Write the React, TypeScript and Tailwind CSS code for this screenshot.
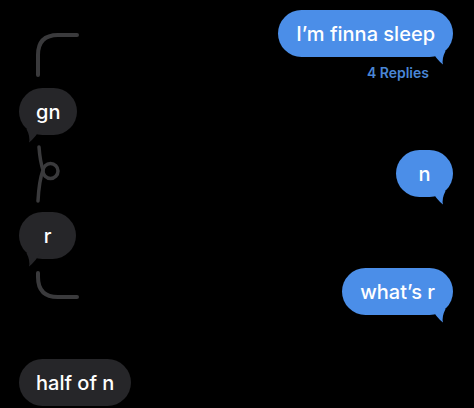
import React from "react";

const font = { fontFamily: "Inter, 'Noto Sans', sans-serif" };

function SentTail() {
  return (
    <svg
      className="absolute right-[7px] bottom-[-8px]"
      width="14"
      height="14"
      viewBox="0 0 14 14"
    >
      <path d="M0 0 Q4 8 11 13.5 Q9.5 8 13.5 0 Z" fill="#4b8ee8" />
    </svg>
  );
}

function ReceivedTail() {
  return (
    <svg
      className="absolute left-[7px] bottom-[-8px]"
      width="14"
      height="14"
      viewBox="0 0 14 14"
    >
      <path d="M14 0 Q10 8 3 13.5 Q4.5 8 0.5 0 Z" fill="#262629" />
    </svg>
  );
}

function Sent({ text, tail = true }: { text: string; tail?: boolean }) {
  return (
    <div className="relative flex h-[47px] min-w-[57px] items-center justify-center rounded-[24px] bg-[#4b8ee8] px-[18px] text-[20px] font-medium leading-[24px] text-white">
      <span className="relative">{text}</span>
      {tail && <SentTail />}
    </div>
  );
}

function Received({ text, tail = true }: { text: string; tail?: boolean }) {
  return (
    <div className="relative flex h-[47px] min-w-[57px] items-center justify-center rounded-[24px] bg-[#262629] px-[17px] text-[20px] font-medium leading-[24px] text-white">
      <span className="relative">{text}</span>
      {tail && <ReceivedTail />}
    </div>
  );
}

export default function App() {
  return (
    <div
      className="flex h-[408px] w-[474px] items-start justify-between overflow-hidden bg-black"
      style={font}
    >
      {/* thread column */}
      <div className="flex flex-col items-start pl-[19px]">
        <svg className="mt-[31px]" width="62" height="46" viewBox="0 0 62 46">
          <path
            d="M58 4 L39 4 Q19 4 19 24 L19 44"
            fill="none"
            stroke="#3a3a3c"
            strokeWidth="4"
            strokeLinecap="round"
          />
        </svg>
        <div className="mt-[11px]">
          <Received text="gn" />
        </div>
        <svg className="mt-[10px]" width="50" height="58" viewBox="0 0 50 58">
          <path
            d="M20 2 Q21 16 24 25 Q20 36 19 56"
            fill="none"
            stroke="#3a3a3c"
            strokeWidth="3.5"
            strokeLinecap="round"
          />
          <circle cx="31.5" cy="26" r="7.5" fill="none" stroke="#3a3a3c" strokeWidth="3.5" />
        </svg>
        <div className="mt-[9px]">
          <Received text="r" />
        </div>
        <svg className="mt-[12px]" width="62" height="30" viewBox="0 0 62 30">
          <path
            d="M19 2 L19 6 Q19 26 39 26 L58 26"
            fill="none"
            stroke="#3a3a3c"
            strokeWidth="4"
            strokeLinecap="round"
          />
        </svg>
        <div className="mt-[58px]">
          <Received text="half of n" tail={false} />
        </div>
      </div>

      {/* outgoing column */}
      <div className="flex flex-col items-end pr-[21px]">
        <div className="mt-[10px]">
          <Sent text="I’m finna sleep" />
        </div>
        <div className="mt-[7px] mr-[24px] text-[14px] font-semibold leading-[17px] text-[#4a86d6]">
          4 Replies
        </div>
        <div className="mt-[69px]">
          <Sent text="n" />
        </div>
        <div className="mt-[71px]">
          <Sent text="what’s r" />
        </div>
      </div>
    </div>
  );
}
